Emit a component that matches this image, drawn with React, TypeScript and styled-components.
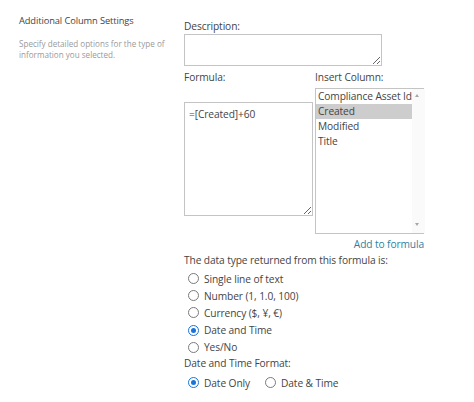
import React from "react";
import styled, { createGlobalStyle } from "styled-components";

const GlobalStyle = createGlobalStyle`
  html, body {
    margin: 0;
    padding: 0;
    background: #ffffff;
  }
  body {
    font-family: "Open Sans", "Noto Sans", sans-serif;
    color: #333333;
  }
`;

const Page = styled.div`
  display: grid;
  grid-template-columns: 184px 240px;
  width: 474px;
  height: 402px;
  box-sizing: border-box;
`;

const SideColumn = styled.div`
  padding: 14px 0 0 19px;
`;

const SideTitle = styled.div`
  font-size: 9.3px;
  line-height: 14px;
  color: #444444;
  letter-spacing: -0.1px;
`;

const SideHint = styled.div`
  margin-top: 10px;
  font-size: 8.1px;
  line-height: 11px;
  color: #9a9a9a;
  width: 160px;
`;

const MainColumn = styled.div`
  display: flex;
  flex-direction: column;
  padding-top: 19px;
`;

const Label = styled.div`
  font-size: 10.2px;
  line-height: 15px;
  color: #444444;
  letter-spacing: -0.1px;
`;

const TextArea = styled.textarea<{ $w: number; $h: number }>`
  display: block;
  box-sizing: border-box;
  width: ${p => p.$w}px;
  height: ${p => p.$h}px;
  margin: 0;
  padding: 4px 4px;
  border: 1px solid #c4c4c4;
  border-radius: 0;
  outline: none;
  font-family: "Open Sans", "Noto Sans", sans-serif;
  font-size: 10.2px;
  line-height: 14px;
  color: #444444;
  letter-spacing: -0.1px;
`;

const FormulaRow = styled.div`
  display: grid;
  grid-template-columns: 131px 109px;
  margin-top: 4px;
`;

const FormulaCol = styled.div`
  display: flex;
  flex-direction: column;
`;

const FormulaBox = styled(TextArea)`
  margin-top: 17px;
`;

const ListBox = styled.div`
  display: grid;
  grid-template-columns: 1fr 13px;
  box-sizing: border-box;
  width: 109px;
  height: 146px;
  margin-top: 3px;
  border: 1px solid #c4c4c4;
  background: #ffffff;
`;

const ListItems = styled.div`
  display: flex;
  flex-direction: column;
`;

const ListItem = styled.div<{ $selected?: boolean }>`
  font-size: 10.2px;
  line-height: 15px;
  padding-left: 2px;
  white-space: nowrap;
  overflow: hidden;
  color: #444444;
  letter-spacing: -0.1px;
  background: ${p => (p.$selected ? "#cdcdcd" : "transparent")};
`;

const ScrollTrack = styled.div`
  display: flex;
  flex-direction: column;
  justify-content: space-between;
  align-items: center;
  padding: 5px 2px 7px 0;
  background: #fafafa;
`;

const Arrow = styled.div<{ $down?: boolean }>`
  width: 0;
  height: 0;
  border-left: 2.5px solid transparent;
  border-right: 2.5px solid transparent;
  ${p =>
    p.$down
      ? "border-top: 3px solid #a8a8a8;"
      : "border-bottom: 3px solid #a8a8a8;"}
`;

const AddLink = styled.a`
  align-self: flex-end;
  margin-top: 3px;
  font-size: 10.2px;
  line-height: 14px;
  color: #2e7fa3;
  text-decoration: none;
  letter-spacing: -0.1px;
`;

const Section = styled.div`
  display: flex;
  flex-direction: column;
  margin-top: 2px;
`;

const RadioList = styled.div`
  display: flex;
  flex-direction: column;
  padding-left: 4px;
  margin-top: 2px;
`;

const RadioInline = styled.div`
  display: flex;
  gap: 15px;
  padding-left: 4px;
  margin-top: 3px;
`;

const RadioRow = styled.label`
  display: flex;
  align-items: center;
  gap: 5px;
  height: 17.2px;
  font-size: 10.2px;
  color: #444444;
  letter-spacing: -0.1px;
`;

const Circle = styled.span<{ $on?: boolean }>`
  box-sizing: border-box;
  width: 11px;
  height: 11px;
  border-radius: 50%;
  border: 1px solid ${p => (p.$on ? "#1a73d9" : "#7a7a7a")};
  display: flex;
  align-items: center;
  justify-content: center;
  &::after {
    content: "";
    width: 5px;
    height: 5px;
    border-radius: 50%;
    background: ${p => (p.$on ? "#1a73d9" : "transparent")};
  }
`;

function Radio({ label, on }: { label: string; on?: boolean }) {
  return (
    <RadioRow>
      <Circle $on={on} />
      {label}
    </RadioRow>
  );
}

const columns = ["Compliance Asset Id", "Created", "Modified", "Title"];
const dataTypes = [
  "Single line of text",
  "Number (1, 1.0, 100)",
  "Currency ($, ¥, €)",
  "Date and Time",
  "Yes/No"
];

export default function App() {
  return (
    <>
      <GlobalStyle />
      <Page>
        <SideColumn>
          <SideTitle>Additional Column Settings</SideTitle>
          <SideHint>
            Specify detailed options for the type of information you selected.
          </SideHint>
        </SideColumn>
        <MainColumn>
          <Label>Description:</Label>
          <TextArea $w={198} $h={32} readOnly />
          <FormulaRow>
            <FormulaCol>
              <Label>Formula:</Label>
              <FormulaBox $w={129} $h={114} defaultValue="=[Created]+60" />
            </FormulaCol>
            <FormulaCol>
              <Label>Insert Column:</Label>
              <ListBox>
                <ListItems>
                  {columns.map(c => (
                    <ListItem key={c} $selected={c === "Created"}>
                      {c}
                    </ListItem>
                  ))}
                </ListItems>
                <ScrollTrack>
                  <Arrow />
                  <Arrow $down />
                </ScrollTrack>
              </ListBox>
              <AddLink href="#">Add to formula</AddLink>
            </FormulaCol>
          </FormulaRow>
          <Section>
            <Label>The data type returned from this formula is:</Label>
            <RadioList>
              {dataTypes.map(t => (
                <Radio key={t} label={t} on={t === "Date and Time"} />
              ))}
            </RadioList>
            <Label>Date and Time Format:</Label>
            <RadioInline>
              <Radio label="Date Only" on />
              <Radio label="Date & Time" />
            </RadioInline>
          </Section>
        </MainColumn>
      </Page>
    </>
  );
}
